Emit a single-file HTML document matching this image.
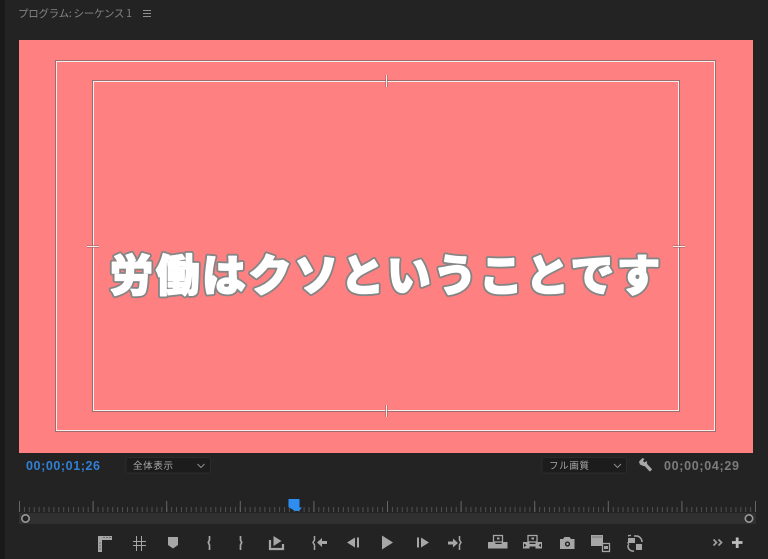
<!DOCTYPE html>
<html lang="ja">
<head>
<meta charset="utf-8">
<title>プログラム: シーケンス 1</title>
<style>
html,body{margin:0;padding:0;background:#232323;width:768px;height:559px;overflow:hidden}
svg{display:block}
text{font-family:"Liberation Sans","Noto Sans CJK JP",sans-serif}
.jp{font-family:"Noto Sans CJK JP",sans-serif}
.soft{filter:blur(.35px)}
</style>
</head>
<body>
<svg width="768" height="559" viewBox="0 0 768 559" xmlns="http://www.w3.org/2000/svg">
<defs>
<pattern id="minor" x="19" y="0" width="4.907" height="20" patternUnits="userSpaceOnUse"><rect width="1" height="20" fill="#505050"/></pattern>
<pattern id="major" x="19" y="0" width="73.6" height="20" patternUnits="userSpaceOnUse"><rect width="1" height="20" fill="#666"/></pattern>
</defs>
<rect width="768" height="559" fill="#232323"/>
<rect x="0" y="0" width="5" height="559" fill="#1a1a1a"/>

<!-- header -->
<g class="soft">
<text class="jp" x="18" y="17" font-size="10.500" fill="#858585" textLength="114">プログラム: シーケンス 1</text>
<path d="M143 10.500h8M143 13.500h8M143 16.500h8" stroke="#909090" stroke-width="1"/>
</g>

<!-- video -->
<rect x="19" y="40" width="734" height="413" fill="#ff8080"/>
<g fill="none">
<rect x="55.500" y="60.500" width="660" height="371" stroke="#a06c6c" stroke-width="1"/>
<rect x="56.500" y="61.500" width="658" height="369" stroke="#f6eeee" stroke-width="1"/>
<rect x="92.500" y="80.500" width="587" height="331" stroke="#a06c6c" stroke-width="1"/>
<rect x="93.500" y="81.500" width="585" height="329" stroke="#f6eeee" stroke-width="1"/>
<path d="M386.500 75v12M386.500 405v12M87 246.500h12M673 246.500h12" stroke="#8f5f5f" stroke-width="2"/>
<path d="M386.500 75v12M386.500 405v12M87 246.500h12M673 246.500h12" stroke="#f6eeee" stroke-width="1"/>
</g>

<!-- title -->
<g class="soft">
<text class="jp" x="109.500" y="291" font-size="44" font-weight="900" textLength="551" lengthAdjust="spacing" fill="#858585" stroke="#858585" stroke-width="5" stroke-linejoin="round">労働はクソということです</text>
<text class="jp" x="109.500" y="291" font-size="44" font-weight="900" textLength="551" lengthAdjust="spacing" fill="#ffffff" stroke="#ffffff" stroke-width="1.300" stroke-linejoin="round">労働はクソということです</text>
</g>

<g class="soft">
<!-- timecodes -->
<text x="26" y="470" font-size="12.500" font-weight="700" fill="#2f80d6" textLength="74">00;00;01;26</text>
<text x="664" y="470" font-size="12.500" font-weight="700" fill="#7c7c7c" textLength="75">00;00;04;29</text>

<!-- dropdowns -->
<rect x="126" y="457.500" width="84.500" height="15.500" rx="2" fill="#1c1c1c" stroke="#2b2b2b"/>
<text class="jp" x="133" y="469" font-size="9.500" fill="#a8a8a8" textLength="40">全体表示</text>
<path d="M197.500 464l3.500 3.500 3.500-3.500" fill="none" stroke="#8e8e8e"/>
<rect x="542" y="457.500" width="84.500" height="15.500" rx="2" fill="#1c1c1c" stroke="#2b2b2b"/>
<text class="jp" x="549" y="469" font-size="9.500" fill="#a8a8a8" textLength="40">フル画質</text>
<path d="M614 464l3.500 3.500 3.500-3.500" fill="none" stroke="#8e8e8e"/>

<!-- wrench -->
<path d="M644.500 463.500l6.500 7" fill="none" stroke="#a8a8a8" stroke-width="3.200"/>
<path d="M639 461.500l3.500-3.500 2 1-1.500 2 1.500 1.500 2-1.500 .8 2-3 3.200-2.500-.8-2-1z" fill="#a8a8a8"/>
</g>

<!-- ruler -->
<rect x="19" y="507" width="737" height="5" fill="url(#minor)"/>
<rect x="19" y="501" width="737" height="11" fill="url(#major)"/>
<rect x="19" y="513" width="737" height="11" fill="#303030"/>
<circle cx="25.500" cy="518.500" r="3.700" fill="#232323" stroke="#9a9a9a" stroke-width="1.600"/>
<circle cx="749" cy="518.500" r="3.700" fill="#232323" stroke="#9a9a9a" stroke-width="1.600"/>
<path d="M288.500 499h11v8.500h2.500l-3 3.500h-4l-6.500-4z" fill="#2f8cf0"/>

<!-- buttons left -->
<g class="soft">
<g fill="#a6a6a6">
<path d="M98 536h14v4h-10v12h-4z"/>
<path d="M103.500 537.500h1M106.500 537.500h1M109.500 537.500h1M99.500 543h1M99.500 546h1M99.500 549h1" stroke="#333" stroke-width="1"/>
<path d="M168 537h10v8l-5 3.500-5-3.500z"/>
</g>
<g fill="none" stroke="#a6a6a6" stroke-width="1">
<path d="M136.500 536v15M141.500 536v15M133 541.500h13M133 545.500h13"/>
<path d="M209.500 536v4l-1.200 2.500 1.200 2.500v5" stroke-width="1.700"/>
<path d="M240.500 536v4l1.200 2.500-1.200 2.500v5" stroke-width="1.700"/>
<path d="M270 540v9h13v-5" stroke-width="2.200"/>
<path d="M273.500 546v-10l8 5z" fill="#a6a6a6" stroke="none"/>
</g>

<!-- transport -->
<g fill="#a6a6a6">
<path d="M314.500 536v4l-1.500 2.500 1.500 2.500v5" fill="none" stroke="#a6a6a6" stroke-width="1.500"/>
<path d="M317 542.500l5-4.500v3h5v3h-5v3z"/>
<path d="M347 542.500l8-5v10zM357 537.500h2v10h-2z"/>
<path d="M382 535.500v14l11-7z"/>
<path d="M417 537.500h2v10h-2zM421 537.500l8 5-8 5z"/>
<path d="M448 541.500h5v-3l5 4.500-5 4.500v-3h-5z"/>
<path d="M459.500 536v4l1.500 2.500-1.500 2.500v5" fill="none" stroke="#a6a6a6" stroke-width="1.500"/>
</g>

<!-- lift / extract -->
<g fill="#a6a6a6">
<path d="M488 542h7l.5 2h6l.5-2h5.500v6.500h-19.500z"/>
<rect x="493.500" y="535.500" width="9" height="6.500" fill="none" stroke="#a6a6a6" stroke-width="1.300"/>
<rect x="497" y="537.500" width="2.500" height="2"/>
<path d="M523 542h6.500v2h6v-2h6.500v6.500h-6.500v-2h-6v2h-6.500z"/>
<rect x="528" y="535.500" width="9" height="6.500" fill="none" stroke="#a6a6a6" stroke-width="1.300"/>
<rect x="531.500" y="537.500" width="2.500" height="2"/>
<path d="M524 543.500l2.500 1.800-2.500 1.800zM541 543.500l-2.500 1.800 2.500 1.800z" fill="#232323"/>
<path d="M560 539h3l1.500-2h5l1.500 2h3.500v10h-14.500z"/>
<circle cx="567.500" cy="544" r="2.600" fill="#232323"/>
<circle cx="567.500" cy="544" r="1.200" fill="#a6a6a6"/>
<rect x="591" y="535" width="12" height="11"/>
<path d="M592 537h10" stroke="#777" fill="none"/>
<rect x="602.500" y="543.500" width="7" height="8" fill="#232323" stroke="#a6a6a6" stroke-width="1.300"/>
<rect x="604" y="546" width="4" height="3"/>
<path d="M628 538h7v5h-7zM636 544h6v6h-6z"/>
<path d="M634 536h3a6 6 0 0 1 5 6" fill="none" stroke="#a6a6a6" stroke-width="1.500"/>
<path d="M628 545v1a5 5 0 0 0 6 5" fill="none" stroke="#a6a6a6" stroke-width="1.500"/>
<path d="M628 536a5 5 0 0 1 3-.5M628 542a6 6 0 0 0 1 3" fill="none" stroke="#a6a6a6" stroke-width="1.300"/>
</g>

<!-- overflow and add -->
<path d="M713.500 539.500l3 3-3 3M718.500 539.500l3 3-3 3" fill="none" stroke="#9c9c9c" stroke-width="1.800"/>
<path d="M732 542.500h10.500M737.200 537.500v10.500" fill="none" stroke="#bdbdbd" stroke-width="2.800"/>
</g>
</svg>
</body>
</html>
